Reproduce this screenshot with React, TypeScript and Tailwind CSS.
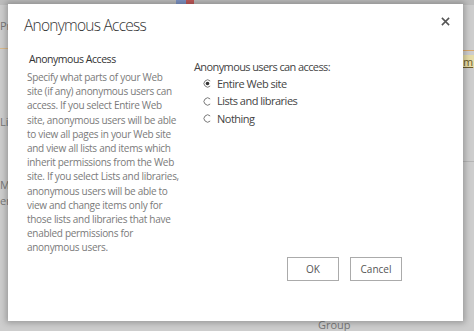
export default function App() {
  const body = [
    "Specify what parts of your Web",
    "site (if any) anonymous users can",
    "access. If you select Entire Web",
    "site, anonymous users will be able",
    "to view all pages in your Web site",
    "and view all lists and items which",
    "inherit permissions from the Web",
    "site. If you select Lists and libraries,",
    "anonymous users will be able to",
    "view and change items only for",
    "those lists and libraries that have",
    "enabled permissions for",
    "anonymous users.",
  ];
  const options = ["Entire Web site", "Lists and libraries", "Nothing"];
  return (
    <div
      className="relative w-[474px] h-[331px] overflow-hidden bg-[#cdcdcd] text-[#444] flex flex-col"
      style={{ fontFamily: '"Open Sans", "Noto Sans", sans-serif' }}
    >
      {/* background page (behind the dialog) */}
      <div className="h-[5px] bg-[#bdbdbd] flex pl-[176px]">
        <div className="w-[10px] h-[4px] bg-[#7f95c6]" />
        <div className="w-[8px] h-[4px] bg-[#c25a5a]" />
      </div>
      <div className="flex-1 flex">
        <div className="w-[10px] flex flex-col text-[11px] text-[#777] leading-none">
          <div className="pt-[15px]">Pr</div>
          <div className="mt-[17px] h-[1px] bg-[#d9b98a]" />
          <div className="mt-[67px]">Li</div>
          <div className="mt-[52px]">Me</div>
          <div className="mt-[5px]">er</div>
        </div>
        <div className="flex-1" />
        <div className="w-[11px] flex flex-col">
          <div className="mt-[45px] h-[1px] bg-[#d9a86a]" />
          <div className="mt-[4px] h-[13px] bg-[#e6dca8] text-[11px] text-[#6b5a2a] leading-[13px] underline">m</div>
          <div className="mt-[93px] h-[1px] bg-[#b5b5b5]" />
        </div>
      </div>
      <div className="h-[12px] pl-[318px] text-[11px] text-[#777] leading-[12px]">Group</div>

      {/* dialog window over the page */}
      <div className="absolute left-[8px] top-[4px] w-[455px] h-[317px] bg-white shadow-[0_0_6px_2px_rgba(0,0,0,0.25)] flex flex-col">
        <div className="flex items-start justify-between pl-[16px] pr-[13px] pt-[9px]">
          <div className="text-[15.5px] font-light leading-[24px] tracking-[-0.75px] text-[#333]">
            Anonymous Access
          </div>
          <svg width="9" height="9" viewBox="0 0 10 10" className="mt-[4px]">
            <path d="M1 1 L9 9 M9 1 L1 9" stroke="#555" strokeWidth="1.7" />
          </svg>
        </div>
        <div className="flex pl-[19px] pt-[14px]">
          <div className="w-[167px]">
            <div className="pl-[2px] text-[10.5px] leading-[16px] text-[#333] tracking-[-0.45px]">Anonymous Access</div>
            <div className="mt-[3px] text-[10px] leading-[14.2px] text-[#7a7a7a] tracking-[-0.3px]">
              {body.map((l) => (
                <div key={l} className="whitespace-nowrap">{l}</div>
              ))}
            </div>
          </div>
          <div className="pt-[8px]">
            <div className="text-[11px] leading-[16px] text-[#444] whitespace-nowrap tracking-[-0.6px]">
              Anonymous users can access:
            </div>
            <div className="flex flex-col">
              {options.map((o, i) => (
                <div key={o} className="flex items-center h-[17.5px] pl-[9px]">
                  <svg width="9" height="9" viewBox="0 0 10 10" className="mr-[5px]">
                    <path d="M8 2.2 A4 4 0 1 0 8 7.8" fill="none" stroke="#777" strokeWidth="1.1" />
                    {i === 0 && <circle cx="5" cy="5" r="2" fill="#333" />}
                  </svg>
                  <span className="text-[11px] text-[#444] whitespace-nowrap tracking-[-0.5px]">{o}</span>
                </div>
              ))}
            </div>
          </div>
        </div>
        <div className="flex-1" />
        <div className="flex justify-end gap-[11px] pr-[61px] pb-[40px]">
          <div className="w-[52px] h-[24px] border border-[#ababab] flex items-center justify-center text-[10px] text-[#555]">
            OK
          </div>
          <div className="w-[52px] h-[24px] border border-[#ababab] flex items-center justify-center text-[10px] text-[#555]">
            Cancel
          </div>
        </div>
      </div>
    </div>
  );
}
